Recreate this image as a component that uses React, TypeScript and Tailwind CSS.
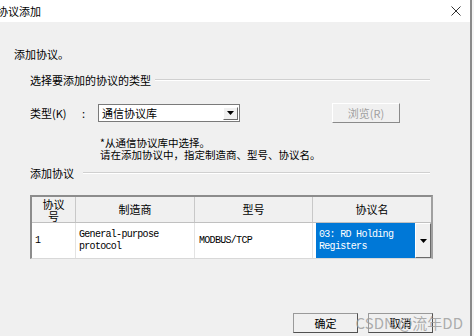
import React from "react";

const Arrow = () => (
  <svg width="7" height="4" viewBox="0 0 7 4">
    <path d="M0 0H7L3.5 4Z" fill="#000" />
  </svg>
);

export default function App() {
  return (
    <div className="w-[474px] h-[336px] flex bg-white overflow-hidden font-['SimSun','Noto_Sans_CJK_SC','Noto_Sans',sans-serif] text-[11px] text-black">
      <div className="w-[470px] flex flex-col">
        {/* title bar */}
        <div className="h-[22px] bg-white flex items-center justify-between">
          <span className="-ml-[3px] leading-[14px]">协议添加</span>
          <svg width="10" height="10" viewBox="0 0 10 10" className="mr-[9px]">
            <path d="M0.5 0.5L9.5 9.5M9.5 0.5L0.5 9.5" stroke="#333" strokeWidth="1" />
          </svg>
        </div>
        {/* body */}
        <div className="flex-1 bg-[#f0f0f0] flex flex-col relative">
          <div className="mt-[25px] h-[14px] pl-[14px] leading-[14px]">添加协议。</div>

          <div className="mt-[12px] h-[14px] flex items-center pl-[30px] pr-[40px]">
            <span className="leading-[14px]">选择要添加的协议的类型</span>
            <div className="flex-1 ml-[4px] h-[2px] border-t border-t-[#d0d0d0] border-b border-b-white" />
          </div>

          <div className="mt-[16px] h-[20px] flex items-center pl-[30px]">
            <span className="w-[52px] leading-[14px]">类型(K)</span>
            <span className="w-[16px] leading-[14px]">:</span>
            <div className="w-[142px] h-[18px] bg-white border border-[#7a7a7a] flex items-center justify-between">
              <span className="pl-[3px] leading-[14px]">通信协议库</span>
              <div className="w-[15px] h-[13px] mr-[1px] bg-[#f0f0f0] border-t border-l border-t-white border-l-white border-b border-r border-b-[#696969] border-r-[#696969] flex items-center justify-center">
                <Arrow />
              </div>
            </div>
            <div className="ml-[92px] w-[68px] h-[20px] bg-[#f0f0f0] border-t border-l border-t-white border-l-white border-b border-r border-b-[#8a8a8a] border-r-[#8a8a8a] flex items-center justify-center text-[#a0a0a0]">
              浏览(R)
            </div>
          </div>

          <div className="mt-[14px] pl-[100px] leading-[12px] text-[10.5px]">
            <div>*从通信协议库中选择。</div>
            <div>请在添加协议中，指定制造商、型号、协议名。</div>
          </div>

          <div className="mt-[5px] h-[14px] flex items-center pl-[30px] pr-[40px]">
            <span className="leading-[14px]">添加协议</span>
            <div className="flex-1 ml-[9px] h-[2px] border-t border-t-[#d0d0d0] border-b border-b-white" />
          </div>

          {/* table */}
          <div className="mt-[15px] ml-[30px] w-[403px] border-l-2 border-t-2 border-l-[#8c8c8c] border-t-[#8c8c8c] border-r-2 border-r-[#a0a0a0] border-b border-b-[#d8d8d8] bg-[#f0f0f0]">
            <div className="flex h-[26px] border-b border-b-[#c0c0c0] bg-[#f0f0f0]">
              <div className="w-[44px] border-r border-r-[#c8c8c8] text-center overflow-hidden leading-[12px] pt-[1px]">
                协议<br />号
              </div>
              <div className="w-[119px] border-r border-r-[#c8c8c8] flex items-center justify-center">制造商</div>
              <div className="w-[118px] border-r border-r-[#c8c8c8] flex items-center justify-center">型号</div>
              <div className="w-[118px] flex items-center justify-center">协议名</div>
            </div>
            <div className="flex h-[35px] bg-white font-['Liberation_Mono',monospace] text-[10px] tracking-[-0.7px] leading-[12px]">
              <div className="w-[44px] border-r border-r-[#e3e3e3] flex items-center pl-[3px]">1</div>
              <div className="w-[119px] border-r border-r-[#e3e3e3] flex items-center pl-[3px]">
                <div>
                  General-purpose<br />protocol
                </div>
              </div>
              <div className="w-[118px] border-r border-r-[#e3e3e3] flex items-center pl-[4px]">MODBUS/TCP</div>
              <div className="w-[118px] flex pl-[3px]">
                <div className="w-[99px] h-full bg-[#0078d7] text-white flex items-center pl-[3px]">
                  <div>
                    03: RD Holding<br />Registers
                  </div>
                </div>
                <div className="w-[16px] h-full bg-[#f0f0f0] border-t border-l border-t-white border-l-white border-b border-r border-b-[#696969] border-r-[#696969] flex items-center justify-center">
                  <Arrow />
                </div>
              </div>
            </div>
          </div>

          {/* buttons */}
          <div className="mt-auto mb-[3px] h-[20px] flex pl-[293px]">
            <div className="w-[65px] h-[20px] bg-[#f0f0f0] border border-[#9a9a9a] border-b-[#505050] border-r-[#505050] flex items-center justify-center">
              确定
            </div>
            <div className="ml-[10px] w-[65px] h-[20px] bg-[#f0f0f0] border border-[#9a9a9a] border-b-[#505050] border-r-[#505050] flex items-center justify-center">
              取消
            </div>
          </div>

          <div className="absolute right-[7px] bottom-[4px] leading-[18px] text-[15px] text-[#9a9a9a]/80 font-['Noto_Sans_CJK_SC',sans-serif] pointer-events-none">
            CSDN @流年DD
          </div>
        </div>
      </div>
      <div className="w-[2px] h-full bg-[#8a8a8a]" />
      <div className="w-[2px] h-full bg-[#f4f4f4]" />
    </div>
  );
}
